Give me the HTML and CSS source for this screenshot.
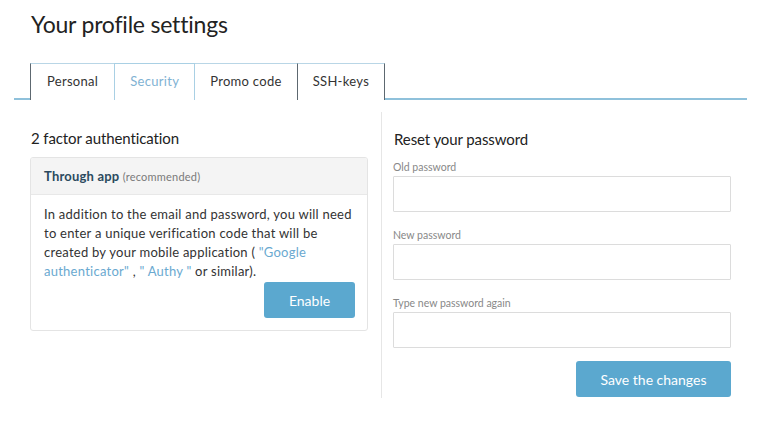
FILE: index.html
```html
<!DOCTYPE html>
<html>
<head>
<meta charset="utf-8">
<link rel="stylesheet" href="styles.css">
</head>
<body>
<div class="page">
  <h1 class="title">Your profile settings</h1>
  <div class="tabs">
    <div class="tab">Personal</div>
    <div class="tab active">Security</div>
    <div class="tab">Promo code</div>
    <div class="tab">SSH-keys</div>
  </div>
  <div class="content">
    <div class="col left">
      <h2 class="heading">2 factor authentication</h2>
      <div class="card">
        <div class="card-head"><b>Through app</b> <span class="rec">(recommended)</span></div>
        <div class="card-body">
          <p class="desc">In addition to the email and password, you will need to enter a unique verification code that will be created by your mobile application ( <a class="lnk">"Google authenticator"</a> , <a class="lnk">" Authy "</a> or similar).</p>
          <div class="actions"><button class="btn enable">Enable</button></div>
        </div>
      </div>
    </div>
    <div class="sep"></div>
    <div class="col right">
      <h2 class="heading">Reset your password</h2>
      <div class="field">
        <label class="label">Old password</label>
        <div class="input"></div>
      </div>
      <div class="field">
        <label class="label">New password</label>
        <div class="input"></div>
      </div>
      <div class="field">
        <label class="label">Type new password again</label>
        <div class="input"></div>
      </div>
      <div class="actions"><button class="btn save">Save the changes</button></div>
    </div>
  </div>
</div>
</body>
</html>
```

FILE: styles.css
```css
* { box-sizing: border-box; }
html, body { margin: 0; padding: 0; background: #fff; }
body { font-family: Lato, "Open Sans", sans-serif; color: #333; }
.page { width: 768px; padding: 0 21px 0 14px; }
.title {
  margin: 0;
  padding: 10px 0 0 17px;
  height: 63px;
  font-size: 23px;
  line-height: 28px;
  font-weight: 400;
  color: #222;
  letter-spacing: -0.2px;
}
.tabs {
  display: flex;
  padding-left: 16px;
  border-bottom: 2px solid #8fc1db;
  height: 37px;
}
.tab {
  height: 37px;
  padding: 0 15px;
  margin-right: -1px;
  border: 1px solid #5d6870;
  border-top-color: #b9d6e6;
  border-bottom: none;
  font-size: 13px;
  line-height: 35px;
  letter-spacing: 0.3px;
  color: #333;
  background: #fff;
  position: relative;
}
.tab:first-child { padding: 0 16px; }
.tab.active {
  color: #7fb2d3;
  border-color: #a9d0e4;
  height: 37px;
  margin-bottom: -2px;
  z-index: 1;
  padding: 0 15px;
}
.content {
  display: flex;
  padding: 12px 16px 0 16px;
}
.col { width: 338px; }
.left { padding-top: 16px; }
.right { padding-top: 17px; }
.sep {
  width: 1px;
  background: #e6e6e6;
  margin: 0 11px 0 13px;
  height: 286px;
}
.heading {
  margin: 0;
  font-size: 15px;
  line-height: 20px;
  font-weight: 400;
  color: #222;
  padding-left: 1px;
  letter-spacing: -0.1px;
}
.card {
  margin-top: 9px;
  border: 1px solid #e4e4e4;
  border-radius: 3px;
  overflow: hidden;
}
.card-head {
  height: 37px;
  background: #f4f4f4;
  border-bottom: 1px solid #e8e8e8;
  padding: 0 13px;
  line-height: 36px;
  font-size: 13px;
}
.card-head b { color: #2b4a5e; font-weight: 700; letter-spacing: 0.2px; }
.rec { font-size: 11px; color: #7a7a7a; letter-spacing: 0.2px; }
.card-body { padding: 10px 12px 12px 13px; }
.desc {
  margin: 0;
  font-size: 13px;
  line-height: 19px;
  color: #333;
  letter-spacing: 0.25px;
}
.lnk { color: #6aa9d0; text-decoration: none; }
.actions { display: flex; justify-content: flex-end; }
.btn {
  border: none;
  border-radius: 3px;
  background: #5ba8cf;
  color: #fff;
  font-family: Lato, "Open Sans", sans-serif;
  font-size: 14px;
  height: 36px;
  padding: 0;
}
.enable { width: 91px; margin-top: 1px; }
.save { width: 155px; margin-top: 13px; }
.field { margin-top: 11px; }
.field + .field { margin-top: 16px; }
.label {
  display: block;
  font-size: 10.5px;
  line-height: 14px;
  color: #888;
  margin-bottom: 2px;
}
.input {
  height: 36px;
  border: 1px solid #dcdcdc;
  border-radius: 1px;
}
```
